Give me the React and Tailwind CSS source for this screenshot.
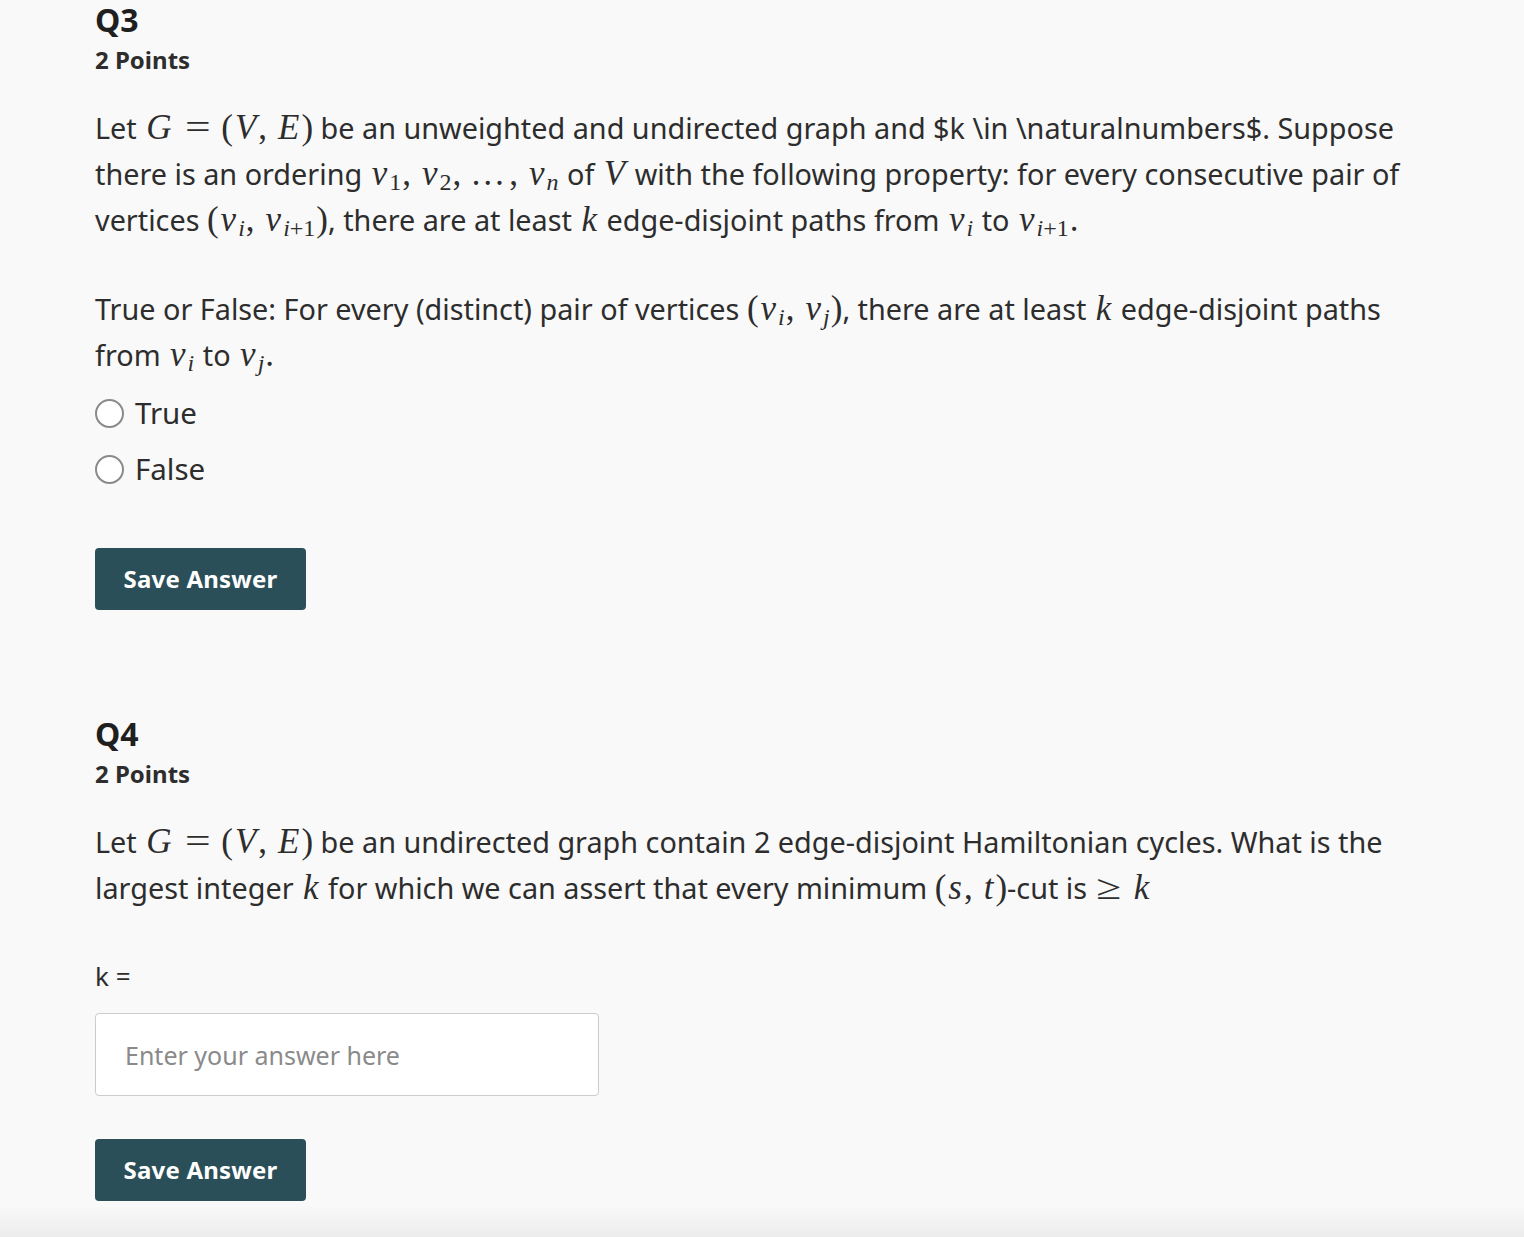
import React from 'react';

// KaTeX-like inline math pieces
const M = ({ children, className = '' }) => (
  <span className={`font-['Liberation_Serif',serif] italic text-[35px] leading-none px-[2px] ${className}`}>{children}</span>
);
const R = ({ children, className = '' }) => (
  <span className={`font-['Liberation_Serif',serif] not-italic text-[35px] leading-none ${className}`}>{children}</span>
);
const Sub = ({ children, italic }) => (
  <span
    className={`font-['Liberation_Serif',serif] text-[24px] leading-none ${italic ? 'italic' : 'not-italic'} relative top-[5px] mr-[1px]`}
  >
    {children}
  </span>
);
const Comma = () => <R className="mr-[9px]">,</R>;
const Eq = () => <R className="mx-[14px] inline-block scale-x-[1.3]">=</R>;

function SaveButton() {
  return (
    <button
      type="button"
      className="w-[211px] h-[62px] rounded-[4px] bg-[#2b4f59] text-white text-[24px] font-bold tracking-[0.2px]"
    >
      Save Answer
    </button>
  );
}

function Radio({ label }) {
  return (
    <label className="flex items-center gap-[11px] h-[56px]">
      <span className="w-[29px] h-[29px] rounded-full border-[2px] border-[#8a8a8a] bg-white" />
      <span className="text-[29.5px] text-[#2d2d2d] leading-none">{label}</span>
    </label>
  );
}

function Header({ title }) {
  return (
    <div>
      <h2 className="text-[32px] font-bold leading-[40px] text-[#1f1f1f]">{title}</h2>
      <div className="text-[24px] font-bold leading-[34px] text-[#2d2d2d] mt-[3px]">2 Points</div>
    </div>
  );
}

export default function App() {
  return (
    <div className="min-h-[1237px] bg-[#f9f9f9] font-['Noto_Sans',sans-serif] text-[#2d2d2d] relative overflow-hidden">
      <div className="pl-[95px] pr-[110px]">
        <section>
          <Header title="Q3" />
          <p className="mt-[28px] text-[28.8px] leading-[46px]">
            Let <M>G</M><Eq /><R>(</R><M>V</M><Comma /><M>E</M><R>)</R> be an unweighted and undirected graph and $k \in \naturalnumbers$. Suppose there is an ordering{' '}
            <M>v</M><Sub>1</Sub><Comma /><M>v</M><Sub>2</Sub><Comma /><R className="tracking-[4px]">…</R><Comma /><M>v</M><Sub italic>n</Sub> of <M>V</M> with the following property: for every consecutive pair of vertices{' '}
            <R>(</R><M>v</M><Sub italic>i</Sub><Comma /><M>v</M><Sub><i>i</i>+1</Sub><R>)</R>, there are at least <M>k</M> edge-disjoint paths from <M>v</M><Sub italic>i</Sub> to <M>v</M><Sub><i>i</i>+1</Sub><R>.</R>
          </p>
          <p className="mt-[43px] text-[28.8px] leading-[46px]">
            True or False: For every (distinct) pair of vertices <R>(</R><M>v</M><Sub italic>i</Sub><Comma /><M>v</M><Sub italic>j</Sub><R>)</R>, there are at least <M>k</M> edge-disjoint paths from <M>v</M><Sub italic>i</Sub> to <M>v</M><Sub italic>j</Sub><R>.</R>
          </p>
          <div className="mt-[7px] flex flex-col">
            <Radio label="True" />
            <Radio label="False" />
          </div>
          <div className="mt-[51px]">
            <SaveButton />
          </div>
        </section>

        <section className="mt-[104px]">
          <Header title="Q4" />
          <p className="mt-[28px] text-[28.8px] leading-[46px]">
            Let <M>G</M><Eq /><R>(</R><M>V</M><Comma /><M>E</M><R>)</R> be an undirected graph contain 2 edge-disjoint Hamiltonian cycles. What is the largest integer <M>k</M> for which we can assert that every minimum <R>(</R><M>s</M><Comma /><M>t</M><R>)</R>-cut is <R className="ml-[4px] mr-[14px] inline-block scale-x-[1.3]">≥</R><M>k</M>
          </p>
          <div className="mt-[48px] text-[26px] leading-[34px]">k =</div>
          <input
            type="text"
            placeholder="Enter your answer here"
            className="mt-[20px] block w-[504px] h-[83px] bg-white border border-[#cccccc] rounded-[4px] px-[29px] text-[25px] placeholder:text-[#8a8a8a] outline-none"
          />
          <div className="mt-[43px]">
            <SaveButton />
          </div>
        </section>
      </div>
      <div className="absolute left-0 right-0 bottom-0 h-[32px] bg-gradient-to-b from-[#f9f9f9] to-[#ececec]" />
    </div>
  );
}
